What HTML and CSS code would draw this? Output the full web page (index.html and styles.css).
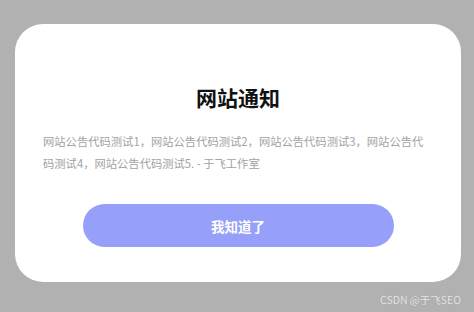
FILE: index.html
```html
<!DOCTYPE html>
<html lang="zh-CN">
<head>
<meta charset="utf-8">
<title>网站通知</title>
<link rel="stylesheet" href="styles.css">
</head>
<body>
<div class="page">
  <div class="card">
    <h1 class="title">网站通知</h1>
    <p class="notice">网站公告代码测试1，网站公告代码测试2，网站公告代码测试3，网站公告代码测试4，网站公告代码测试5. - 于飞工作室</p>
    <button class="ok-btn" type="button">我知道了</button>
  </div>
  <div class="watermark">CSDN @于飞SEO</div>
</div>
</body>
</html>
```

FILE: styles.css
```css
html, body {
  margin: 0;
  padding: 0;
  height: 100%;
}
body {
  background: #b1b1b1;
  font-family: "Noto Sans CJK SC", "Noto Sans", sans-serif;
}
.page {
  display: flex;
  flex-direction: column;
  padding: 24px 13px 0 15px;
}
.card {
  background: #ffffff;
  border-radius: 28px;
  height: 258px;
  box-sizing: border-box;
  padding: 59px 28px 0 28px;
  display: flex;
  flex-direction: column;
  align-items: center;
}
.title {
  margin: 0;
  font-size: 21px;
  line-height: 28px;
  font-weight: 700;
  color: #111111;
}
.notice {
  margin: 19px 0 0 0;
  align-self: stretch;
  font-size: 11.3px;
  line-height: 22px;
  color: #a2a2a2;
}
.ok-btn {
  margin-top: 30px;
  width: 311px;
  height: 43px;
  border: none;
  border-radius: 22px;
  background: #96a0fa;
  color: #ffffff;
  font-family: inherit;
  font-size: 13.5px;
  font-weight: 700;
  padding: 0;
}
.watermark {
  align-self: flex-end;
  margin-top: 10px;
  font-size: 10.5px;
  line-height: 16px;
  color: #e6e6e6;
  text-shadow: 0 0 1px #9a9a9a;
}
```
